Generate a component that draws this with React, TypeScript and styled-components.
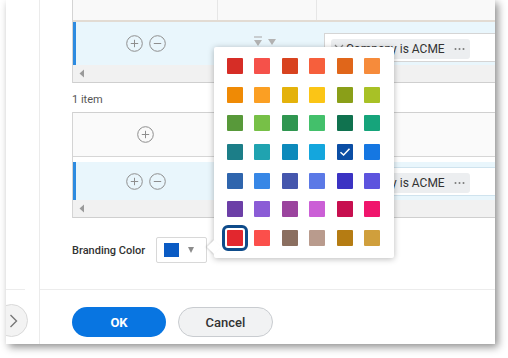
import React from "react";
import styled, { createGlobalStyle } from "styled-components";

const GlobalStyle = createGlobalStyle`
  html, body { margin: 0; padding: 0; background: #fff; }
  body {
    font-family: Roboto, "Liberation Sans", Arial, sans-serif;
    width: 508px; height: 358px; overflow: hidden;
  }
  * { box-sizing: border-box; }
`;

const Window = styled.div`
  position: relative;
  margin-left: 6px;
  width: 489px;
  height: 344px;
  background: #fff;
  box-shadow: 3px 3px 8px rgba(0, 0, 0, 0.45);
  display: flex;
  overflow: hidden;
`;

const Sidebar = styled.div`
  width: 34px;
  flex: none;
  border-right: 1px solid #ebebeb;
  display: flex;
  flex-direction: column;
`;

const SidebarTop = styled.div`
  height: 290px;
  flex: none;
  margin-right: 14px;
  border-bottom: 1px solid #ececec;
`;

const CollapseButton = styled.div`
  width: 33px;
  height: 33px;
  margin-left: -11px;
  margin-top: 14px;
  border-radius: 50%;
  background: #f3f3f3;
  border: 1px solid #d9d9d9;
  display: flex;
  align-items: center;
  justify-content: center;
  padding-left: 4px;
`;

const Main = styled.div`
  flex: 1;
  display: flex;
  flex-direction: column;
  min-width: 0;
`;

const Content = styled.div`
  height: 289px;
  flex: none;
  padding-left: 32px;
  overflow: hidden;
`;

const Table = styled.div`
  width: 440px;
  border-left: 1px solid #d4d4d4;
`;

const HeaderRow = styled.div`
  display: grid;
  grid-template-columns: 145px 99px 1fr;
  height: 22px;
  background: #f9f9f9;
  border-bottom: 2px solid #e2dbd3;
`;

const HeaderCell = styled.div<{ $last?: boolean }>`
  border-right: ${(p) => (p.$last ? "none" : "1px solid #e6e6e6")};
`;

const Row = styled.div<{ $h: number; $selected?: boolean; $bg?: string }>`
  display: grid;
  grid-template-columns: 145px 99px 1fr;
  height: ${(p) => p.$h}px;
  background: ${(p) => (p.$selected ? "#e9f6fc" : p.$bg || "#fff")};
  box-shadow: ${(p) => (p.$selected ? "inset 3px 0 0 #2d8be0" : "none")};
`;

const ActionCell = styled.div`
  display: flex;
  align-items: center;
  justify-content: center;
  gap: 6px;
`;

const FilterCell = styled.div`
  display: flex;
  align-items: flex-start;
  gap: 4px;
  padding: 14px 0 0 35px;
`;

const ValueCell = styled.div<{ $top: number }>`
  padding: ${(p) => p.$top}px 0 0 7px;
`;

const InputBox = styled.div<{ $border: string }>`
  height: 29px;
  border: 1px solid ${(p) => p.$border};
  border-right: none;
  background: #fff;
  padding: 4px 0 0 6px;
`;

const Chip = styled.div`
  display: inline-flex;
  align-items: center;
  gap: 2px;
  height: 20px;
  padding: 0 5px 0 3px;
  background: #eceef0;
  border-radius: 3px;
  font-size: 12px;
  color: #333;
  white-space: nowrap;
`;

const ScrollRow = styled.div`
  height: 18px;
  background: #f1f1f1;
  border-bottom: 1px solid #cfcfcf;
  display: flex;
  align-items: center;
  padding-left: 6px;
`;

const Gap = styled.div`
  height: 6px;
  background: #fff;
  border-top: 1px solid #d6d6d6;
`;

const ItemCount = styled.div`
  height: 29px;
  padding-top: 11px;
  font-size: 11px;
  line-height: 12px;
  color: #555;
`;

const TableTop = styled.div`
  border-top: 1px solid #d0d0d0;
`;

const BrandingRow = styled.div`
  margin-top: 19px;
  display: flex;
  align-items: center;
  height: 26px;
`;

const Label = styled.div`
  width: 84px;
  font-size: 11px;
  font-weight: 500;
  color: #333;
`;

const ColorSelect = styled.div`
  width: 51px;
  height: 26px;
  border: 1px solid #d8d8d8;
  border-radius: 2px;
  display: flex;
  align-items: center;
  padding-left: 7px;
  gap: 9px;
`;

const SelectedColor = styled.div<{ $color: string }>`
  width: 15px;
  height: 14px;
  background: ${(p) => p.$color};
`;

const Caret = styled.div`
  width: 0;
  height: 0;
  border-left: 3.5px solid transparent;
  border-right: 3.5px solid transparent;
  border-top: 6px solid #8c8c8c;
`;

const Footer = styled.div`
  flex: 1;
  border-top: 1px solid #ececec;
  padding: 17px 0 0 32px;
  display: flex;
  gap: 12px;
  align-items: flex-start;
`;

const Button = styled.button<{ $primary?: boolean }>`
  width: ${(p) => (p.$primary ? 94 : 95)}px;
  height: 30px;
  border-radius: 15px;
  font-family: Roboto, "Liberation Sans", Arial, sans-serif;
  font-size: 13px;
  font-weight: ${(p) => (p.$primary ? 700 : 500)};
  color: ${(p) => (p.$primary ? "#fff" : "#333")};
  background: ${(p) => (p.$primary ? "#0875e1" : "#f1f2f3")};
  border: ${(p) => (p.$primary ? "none" : "1px solid #c9ccd0")};
  padding: 0;
`;

const Popup = styled.div`
  position: absolute;
  left: 208px;
  top: 47px;
  width: 180px;
  height: 211px;
  background: #fff;
  border-radius: 2px;
  box-shadow: 0 1px 6px rgba(0, 0, 0, 0.28);
  padding: 11px 0 0 13px;
  display: grid;
  grid-template-columns: repeat(6, 16px);
  grid-auto-rows: 16px;
  column-gap: 11.4px;
  row-gap: 12.7px;
  &::before {
    content: "";
    position: absolute;
    left: -5px;
    top: 195px;
    width: 10px;
    height: 10px;
    background: #fff;
    transform: rotate(45deg);
    box-shadow: -1px 1px 2px rgba(0, 0, 0, 0.15);
  }
`;

const Swatch = styled.div<{ $color: string; $current?: boolean }>`
  position: relative;
  width: 16px;
  height: 16px;
  background: ${(p) => p.$color};
  border-radius: 1px;
  display: flex;
  align-items: center;
  justify-content: center;
  outline: ${(p) => (p.$current ? "3px solid #0e4b8a" : "none")};
  outline-offset: 2px;
`;

const COLORS = [
  ["#d62d26", "#f5514a", "#d8431f", "#f65f3c", "#e0661a", "#f68b3b"],
  ["#ef8a05", "#fb9f23", "#e4b20b", "#fbc516", "#8a9f18", "#a8c126"],
  ["#58993a", "#77c047", "#2f9650", "#43c06b", "#10724f", "#16a47b"],
  ["#1c7e88", "#20a3b0", "#0d8abb", "#14a6dd", "#0b4ea5", "#1577e2"],
  ["#2f65ad", "#3787e6", "#4556ad", "#5b79e6", "#3b33c3", "#5d54de"],
  ["#6c3fa7", "#8b5cd6", "#9b449e", "#cb5fd6", "#c70f4f", "#f0156c"],
  ["#e2272e", "#fb4f4b", "#8b6f60", "#b99b8d", "#b57c13", "#d09f3c"],
];

const CircleIcon = ({ minus }: { minus?: boolean }) => (
  <svg width="17" height="17" viewBox="0 0 17 17">
    <circle cx="8.5" cy="8.5" r="7.8" fill="none" stroke="#8e8e8e" strokeWidth="1" />
    <line x1="4.8" y1="8.5" x2="12.2" y2="8.5" stroke="#8e8e8e" strokeWidth="1" />
    {!minus && <line x1="8.5" y1="4.8" x2="8.5" y2="12.2" stroke="#8e8e8e" strokeWidth="1" />}
  </svg>
);

const FilterIcon = ({ bar }: { bar?: boolean }) => (
  <svg width="10" height="12" viewBox="0 0 10 12">
    {bar && <line x1="1" y1="1" x2="9" y2="1" stroke="#b3b3b3" strokeWidth="1.2" />}
    <path d={bar ? "M1 4 L9 4 L5 10 Z" : "M1 3 L9 3 L5 9 Z"} fill="#b3b3b3" />
  </svg>
);

const LeftArrow = () => (
  <svg width="6" height="9" viewBox="0 0 6 9">
    <path d="M5 0.5 L5 8.5 L0.5 4.5 Z" fill="#9a9a9a" />
  </svg>
);

const JoinIcon = () => (
  <svg width="10" height="9" viewBox="0 0 10 9">
    <path d="M1 1 L4.2 4.5 L1 8 M9 1 L5.8 4.5 L9 8" fill="none" stroke="#888" strokeWidth="1.2" />
  </svg>
);

const MoreIcon = () => (
  <svg width="11" height="4" viewBox="0 0 11 4" style={{ marginLeft: 7 }}>
    <circle cx="1.5" cy="2" r="1" fill="#7a7a7a" />
    <circle cx="5.5" cy="2" r="1" fill="#7a7a7a" />
    <circle cx="9.5" cy="2" r="1" fill="#7a7a7a" />
  </svg>
);

const Check = () => (
  <svg width="12" height="10" viewBox="0 0 12 10">
    <path d="M1.5 5.2 L4.6 8 L10.5 1.8" fill="none" stroke="#fff" strokeWidth="1.5" />
  </svg>
);

const Chevron = () => (
  <svg width="9" height="14" viewBox="0 0 9 14">
    <path d="M1.5 1 L7.5 7 L1.5 13" fill="none" stroke="#777" strokeWidth="1.4" />
  </svg>
);

const CompanyChip = () => (
  <Chip>
    <JoinIcon />
    <span>Company is ACME</span>
    <MoreIcon />
  </Chip>
);

export default function App() {
  return (
    <>
      <GlobalStyle />
      <Window>
        <Sidebar>
          <SidebarTop />
          <CollapseButton>
            <Chevron />
          </CollapseButton>
        </Sidebar>
        <Main>
          <Content>
            <Table>
              <HeaderRow>
                <HeaderCell />
                <HeaderCell />
                <HeaderCell $last />
              </HeaderRow>
              <Row $h={43} $selected>
                <ActionCell>
                  <CircleIcon />
                  <CircleIcon minus />
                </ActionCell>
                <FilterCell>
                  <FilterIcon bar />
                  <FilterIcon />
                </FilterCell>
                <ValueCell $top={11}>
                  <InputBox $border="#d5d5d5">
                    <CompanyChip />
                  </InputBox>
                </ValueCell>
              </Row>
              <ScrollRow>
                <LeftArrow />
              </ScrollRow>
            </Table>
            <ItemCount>1 item</ItemCount>
            <Table>
              <TableTop />
              <Row $h={43} $bg="#fafafa">
                <ActionCell>
                  <CircleIcon />
                </ActionCell>
                <div />
                <div />
              </Row>
              <Gap />
              <Row $h={38} $selected>
                <ActionCell>
                  <CircleIcon />
                  <CircleIcon minus />
                </ActionCell>
                <div />
                <ValueCell $top={5}>
                  <InputBox $border="#cfe3ee">
                    <CompanyChip />
                  </InputBox>
                </ValueCell>
              </Row>
              <ScrollRow>
                <LeftArrow />
              </ScrollRow>
            </Table>
            <BrandingRow>
              <Label>Branding Color</Label>
              <ColorSelect>
                <SelectedColor $color="#0a5bc4" />
                <Caret />
              </ColorSelect>
            </BrandingRow>
          </Content>
          <Footer>
            <Button $primary>OK</Button>
            <Button>Cancel</Button>
          </Footer>
        </Main>
        <Popup>
          {COLORS.flatMap((row, r) =>
            row.map((c, i) => (
              <Swatch key={`${r}-${i}`} $color={c} $current={r === 6 && i === 0}>
                {r === 3 && i === 4 && <Check />}
              </Swatch>
            ))
          )}
        </Popup>
      </Window>
    </>
  );
}
